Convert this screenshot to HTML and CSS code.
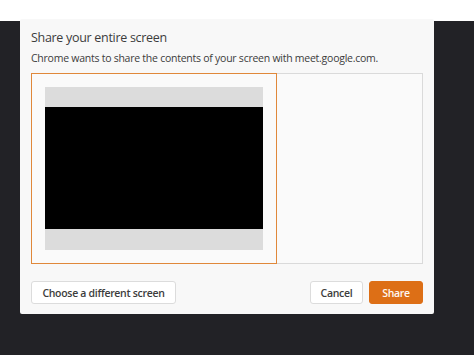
FILE: index.html
```html
<!DOCTYPE html>
<html lang="en">
<head>
    <meta charset="UTF-8">
    <title>Share your entire screen</title>
    <link rel="stylesheet" href="styles.css">
</head>
<body>
    <div class="topbar"></div>
    <div class="desktop"></div>

    <div class="dialog">
        <h1>Share your entire screen</h1>
        <p class="subtitle">Chrome wants to share the contents of your screen with meet.google.com.</p>

        <div class="screens">
            <div class="screen selected">
                <div class="thumb">
                    <div class="thumb-bar"></div>
                    <div class="thumb-body"></div>
                    <div class="thumb-bar bottom"></div>
                </div>
            </div>
            <div class="screen"></div>
        </div>

        <div class="actions">
            <button class="btn wide">Choose a different screen</button>
            <div class="spacer"></div>
            <button class="btn">Cancel</button>
            <button class="btn primary">Share</button>
        </div>
    </div>
</body>
</html>
```

FILE: styles.css
```css
html, body {
    margin: 0;
    padding: 0;
    height: 100%;
}
body {
    font-family: "Open Sans", "Noto Sans", sans-serif;
    background-color: #ffffff;
    display: flex;
    flex-direction: column;
    position: relative;
    overflow: hidden;
}
.topbar {
    height: 21px;
    background-color: #ffffff;
}
.desktop {
    flex: 1;
    background-color: #222226;
}
.dialog {
    position: absolute;
    left: 20px;
    top: 19px;
    width: 414px;
    height: 295px;
    box-sizing: border-box;
    padding: 9px 11px 0 11px;
    background-color: #f8f8f8;
    border-radius: 2px;
    color: #3c3c3c;
}
h1 {
    font-size: 12.5px;
    font-weight: normal;
    margin: 0;
    line-height: 20px;
    letter-spacing: -0.3px;
}
.subtitle {
    font-size: 10.5px;
    margin: 3px 0 0 0;
    line-height: 15px;
    letter-spacing: -0.25px;
}
.screens {
    display: flex;
    margin-top: 7px;
    height: 191px;
    background-color: #fafafa;
}
.screen {
    flex: 1;
    border: 1px solid #dadada;
    border-left: none;
}
.screen.selected {
    flex: none;
    width: 218px;
    border: 1px solid #e0883a;
    padding: 13px;
}
.thumb {
    width: 218px;
    height: 163px;
    display: flex;
    flex-direction: column;
}
.thumb-bar {
    height: 20px;
    background-color: #dcdcdc;
}
.thumb-bar.bottom {
    height: 21px;
}
.thumb-body {
    flex: 1;
    background-color: #000000;
}
.actions {
    display: flex;
    gap: 6px;
    margin-top: 17px;
}
.spacer {
    flex: 1;
}
.btn {
    font-family: "Open Sans", "Noto Sans", sans-serif;
    font-size: 10.5px;
    font-weight: 600;
    color: #3c3c3c;
    height: 23px;
    width: 53px;
    padding: 0;
    white-space: nowrap;
    background-color: #ffffff;
    border: 1px solid #dcdcdc;
    border-radius: 3px;
    letter-spacing: -0.3px;
}
.btn.wide {
    width: 145px;
}
.btn.primary {
    width: 54px;
    background-color: #dd6f16;
    border-color: #dd6f16;
    color: #fff8f0;
}
```
